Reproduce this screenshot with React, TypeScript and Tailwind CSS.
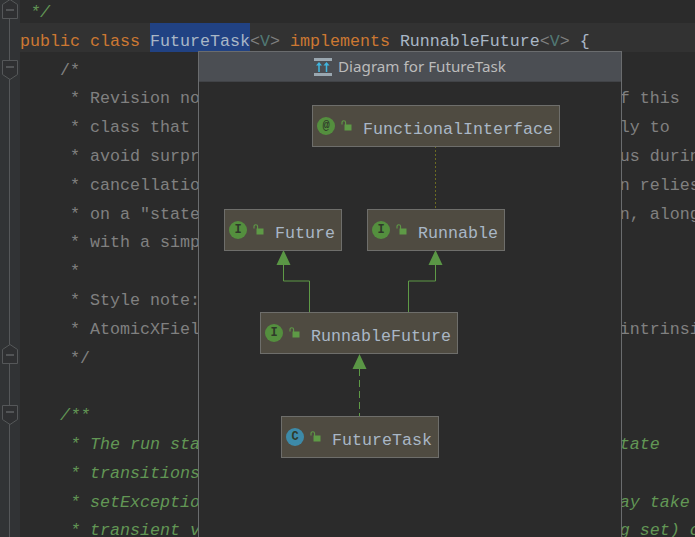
import React from 'react';

type Part = { text: string; color: string };

const KEYWORD = 'text-[#cc7832]';
const PLAIN = 'text-[#a9b7c6]';
const COMMENT = 'text-[#808080]';
const GENERIC = 'text-[#507874]';

const blockComment = [
  '    /*',
  '     * Revision notes: This differs from previous versions of this',
  '     * class that relied on AbstractQueuedSynchronizer, mainly to',
  '     * avoid surprising users about retaining interrupt status during',
  '     * cancellation races. Sync control in the current design relies',
  '     * on a "state" field updated via CAS to track completion, along',
  '     * with a simple Treiber stack to hold waiter threads.',
  '     *',
  '     * Style note: As usual, we bypass overhead of using',
  '     * AtomicXFieldUpdaters and instead directly use Unsafe intrinsics.',
  '     */',
];

const javadoc = [
  '    /**',
  '     * The run state of this task, initially NEW.  The run state',
  '     * transitions to a terminal state only in methods set,',
  '     * setException, and cancel.  During completion, state may take on',
  '     * transient values of COMPLETING (while outcome is being set) or',
];

const FoldMark = ({ top, end }: { top: number; end?: boolean }) => (
  <svg
    className="absolute left-[2px]"
    style={{ top }}
    width="16"
    height="20"
    viewBox="0 0 16 20"
    fill="#2f3032"
    stroke="#555759"
  >
    {end ? <path d="M.5 19.5V5.5L8 .5l7.5 5v14z" /> : <path d="M.5.5h15v14L8 19.5.5 14.500z" />}
    <path d={end ? 'M4 11h8' : 'M4 7h8'} stroke="#77797b" />
  </svg>
);

const LockIcon = () => (
  <svg width="11" height="11" viewBox="0 0 11 11" className="shrink-0">
    <path d="M1 4.500V2.500a1.800 1.800 0 0 1 3.600 0V5" fill="none" stroke="#5e9a46" strokeWidth="1.100" />
    <rect x="3.500" y="4.500" width="7" height="6" fill="#5e9a46" />
  </svg>
);

const NodeBox = ({
  name,
  glyph,
  blue,
  left,
  top,
  width,
}: {
  name: string;
  glyph: string;
  blue?: boolean;
  left: number;
  top: number;
  width: number;
}) => (
  <div
    className="absolute h-[42px] flex items-center bg-[#4f4b41] border border-[#6e6e6b] pl-[4px] pr-[6px]"
    style={{ left, top, width }}
  >
    <span
      className={`w-[18px] h-[18px] rounded-full flex items-center justify-center text-[12px] font-bold text-[#2f3a2a] shrink-0 font-['Liberation_Mono',monospace] ${
        blue ? 'bg-[#3d8aa8]' : 'bg-[#548f3e]'
      }`}
    >
      {glyph}
    </span>
    <span className="ml-[6px] -mt-[2px]">
      <LockIcon />
    </span>
    <span className="ml-auto pt-[9px] text-[16.67px] text-[#a9b7c6] font-['Liberation_Mono',monospace] leading-none whitespace-pre">
      {name}
    </span>
  </div>
);

const Edges = () => (
  <svg className="absolute left-0 top-0" width="423" height="456" fill="none">
    <path d="M236.500 64v63" stroke="#6b6b22" strokeDasharray="2 2" />
    <path d="M84.500 183v16h26v31M236.500 183v16h-27v31" stroke="#5e9a46" />
    <path d="M160.500 287v47" stroke="#5e9a46" strokeDasharray="7 4" />
    <path d="M84.500 168l7 15h-14zM236.500 168l7 15h-14zM160.500 272l7 15h-14z" fill="#5a9645" />
  </svg>
);

const App = () => {
  const topLine: Part[] = [
    { text: 'public class ', color: KEYWORD },
    { text: 'FutureTask', color: PLAIN },
    { text: '<', color: COMMENT },
    { text: 'V', color: GENERIC },
    { text: '> ', color: COMMENT },
    { text: 'implements ', color: KEYWORD },
    { text: 'RunnableFuture', color: PLAIN },
    { text: '<', color: COMMENT },
    { text: 'V', color: GENERIC },
    { text: '> ', color: COMMENT },
    { text: '{', color: PLAIN },
  ];

  return (
    <div className="relative h-[537px] w-[695px] overflow-hidden flex bg-[#2b2b2b] font-['Liberation_Mono',monospace] text-[16.67px]">
      {/* Gutter */}
      <div className="relative w-[20px] shrink-0 bg-[#313335]">
        <div className="absolute left-[9px] top-0 bottom-0 w-px bg-[#555759]" />
        <FoldMark top={-1} end />
        <FoldMark top={60} />
        <FoldMark top={344} end />
        <FoldMark top={405} />
      </div>

      {/* Code */}
      <div className="flex-1 min-w-0 -mt-[6px] leading-[38px] whitespace-pre">
        <div className="h-[28.8px] italic text-[#629755]"> */</div>
        <div className="h-[28.8px] bg-[#323232]">
          {topLine.map((part, i) => (
            <span
              key={i}
              className={`inline-block h-[28.8px] align-top ${part.color} ${part.text === 'FutureTask' ? 'bg-[#214283]' : ''}`}
            >
              {part.text}
            </span>
          ))}
        </div>
        {blockComment.map((line, i) => (
          <div key={i} className={`h-[28.8px] ${COMMENT}`}>
            {line}
          </div>
        ))}
        <div className="h-[28.8px]" />
        {javadoc.map((line, i) => (
          <div key={i} className="h-[28.8px] italic text-[#629755]">
            {line}
          </div>
        ))}
      </div>

      {/* Diagram popup */}
      <div className="absolute left-[198px] top-[51px] w-[424px] h-[486px] flex flex-col bg-[#2b2b2b] border-x border-t border-[#6a6c6e]">
        <div className="h-[30px] shrink-0 flex items-center justify-center gap-[6px] bg-[#4b4e53] border-b border-[#414347]">
          <svg width="18" height="18" viewBox="0 0 18 18" fill="none">
            <rect x="0" y="0" width="18" height="3" fill="#9aa7b0" />
            <rect x="0" y="15" width="18" height="3" fill="#9aa7b0" />
            <path d="M5 14V6M12.500 14V6" stroke="#40b6e0" strokeWidth="1.500" />
            <path d="M5 4l3 3.500H2zM12.500 4l3 3.500h-6z" fill="#40b6e0" />
          </svg>
          <span className="font-['Noto_Sans',sans-serif] text-[15.200px] text-[#bbbbbb]">Diagram for FutureTask</span>
        </div>
        <div className="relative flex-1">
          <Edges />
          <NodeBox name="FunctionalInterface" glyph="@" left={113} top={23} width={248} />
          <NodeBox name="Future" glyph="I" left={25} top={127} width={118} />
          <NodeBox name="Runnable" glyph="I" left={168} top={127} width={138} />
          <NodeBox name="RunnableFuture" glyph="I" left={61} top={230} width={198} />
          <NodeBox name="FutureTask" glyph="C" blue left={82} top={334} width={158} />
        </div>
      </div>
    </div>
  );
};

export default App;
